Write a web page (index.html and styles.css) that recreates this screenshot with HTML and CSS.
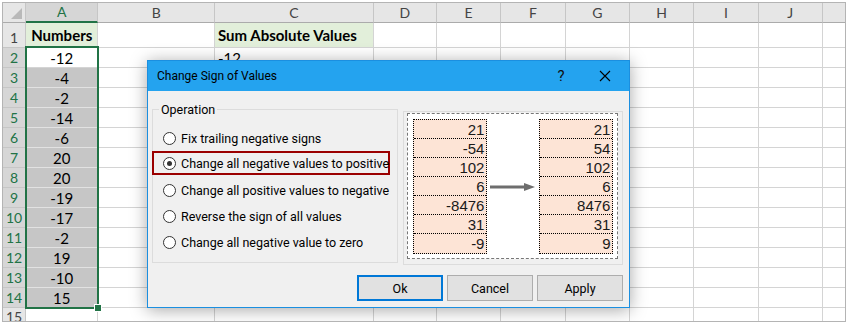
FILE: index.html
```html
<!DOCTYPE html>
<html lang="en">
<head>
<meta charset="UTF-8">
<title>Change Sign of Values</title>
<link rel="stylesheet" href="styles.css">
</head>
<body>
<div class="sheet">
    <table class="grid">
        <colgroup>
            <col style="width:23px"><col style="width:72px"><col style="width:116px"><col style="width:158px">
            <col style="width:63px"><col style="width:64px"><col style="width:64px"><col style="width:64px">
            <col style="width:64px"><col style="width:64px"><col style="width:64px"><col style="width:26px">
        </colgroup>
        <tr class="head-row">
            <th class="corner"><span class="corner-mark"></span></th>
            <th class="col-sel">A</th><th>B</th><th>C</th><th>D</th><th>E</th><th>F</th><th>G</th><th>H</th><th>I</th><th>J</th><th></th>
        </tr>
        <tr class="row-1">
            <th>1</th><td class="title center">Numbers</td><td></td><td class="title">Sum Absolute Values</td><td></td><td></td><td></td><td></td><td></td><td></td><td></td><td></td>
        </tr>
        <tr><th class="row-sel">2</th><td class="center active">-12</td><td></td><td>-12</td><td></td><td></td><td></td><td></td><td></td><td></td><td></td><td></td></tr>
        <tr><th class="row-sel">3</th><td class="center sel">-4</td><td></td><td></td><td></td><td></td><td></td><td></td><td></td><td></td><td></td><td></td></tr>
        <tr><th class="row-sel">4</th><td class="center sel">-2</td><td></td><td></td><td></td><td></td><td></td><td></td><td></td><td></td><td></td><td></td></tr>
        <tr><th class="row-sel">5</th><td class="center sel">-14</td><td></td><td></td><td></td><td></td><td></td><td></td><td></td><td></td><td></td><td></td></tr>
        <tr><th class="row-sel">6</th><td class="center sel">-6</td><td></td><td></td><td></td><td></td><td></td><td></td><td></td><td></td><td></td><td></td></tr>
        <tr><th class="row-sel">7</th><td class="center sel">20</td><td></td><td></td><td></td><td></td><td></td><td></td><td></td><td></td><td></td><td></td></tr>
        <tr><th class="row-sel">8</th><td class="center sel">20</td><td></td><td></td><td></td><td></td><td></td><td></td><td></td><td></td><td></td><td></td></tr>
        <tr><th class="row-sel">9</th><td class="center sel">-19</td><td></td><td></td><td></td><td></td><td></td><td></td><td></td><td></td><td></td><td></td></tr>
        <tr><th class="row-sel">10</th><td class="center sel">-17</td><td></td><td></td><td></td><td></td><td></td><td></td><td></td><td></td><td></td><td></td></tr>
        <tr><th class="row-sel">11</th><td class="center sel">-2</td><td></td><td></td><td></td><td></td><td></td><td></td><td></td><td></td><td></td><td></td></tr>
        <tr><th class="row-sel">12</th><td class="center sel">19</td><td></td><td></td><td></td><td></td><td></td><td></td><td></td><td></td><td></td><td></td></tr>
        <tr><th class="row-sel">13</th><td class="center sel">-10</td><td></td><td></td><td></td><td></td><td></td><td></td><td></td><td></td><td></td><td></td></tr>
        <tr><th class="row-sel">14</th><td class="center sel">15</td><td></td><td></td><td></td><td></td><td></td><td></td><td></td><td></td><td></td><td></td></tr>
        <tr class="row-last"><th>15</th><td></td><td></td><td></td><td></td><td></td><td></td><td></td><td></td><td></td><td></td><td></td></tr>
    </table>
    <div class="selection"><span class="fill-handle"></span></div>

    <div class="dialog">
        <div class="title-bar">
            <span class="title-text">Change Sign of Values</span>
            <span class="title-help">?</span>
            <svg class="title-close" width="12" height="12" viewBox="0 0 12 12">
                <path d="M1 1 L11 11 M11 1 L1 11" stroke="#000" stroke-width="1.1" fill="none"/>
            </svg>
        </div>
        <div class="dialog-body">
            <div class="panes">
                <fieldset class="operation">
                    <legend>Operation</legend>
                    <div class="option"><span class="radio"></span>Fix trailing negative signs</div>
                    <div class="option highlighted"><span class="radio checked"></span>Change all negative values to positive</div>
                    <div class="option"><span class="radio"></span>Change all positive values to negative</div>
                    <div class="option"><span class="radio"></span>Reverse the sign of all values</div>
                    <div class="option"><span class="radio"></span>Change all negative value to zero</div>
                </fieldset>
                <div class="preview">
                    <div class="preview-inner">
                        <div class="sample">
                            <div class="sample-cell">21</div>
                            <div class="sample-cell">-54</div>
                            <div class="sample-cell">102</div>
                            <div class="sample-cell">6</div>
                            <div class="sample-cell">-8476</div>
                            <div class="sample-cell">31</div>
                            <div class="sample-cell">-9</div>
                        </div>
                        <div class="arrow">
                            <svg width="46" height="10" viewBox="0 0 46 10">
                                <path d="M0 5 H36" stroke="#6e6e6e" stroke-width="3"/>
                                <path d="M34 1 L45 5 L34 9 Z" fill="#6e6e6e"/>
                            </svg>
                        </div>
                        <div class="sample">
                            <div class="sample-cell">21</div>
                            <div class="sample-cell">54</div>
                            <div class="sample-cell">102</div>
                            <div class="sample-cell">6</div>
                            <div class="sample-cell">8476</div>
                            <div class="sample-cell">31</div>
                            <div class="sample-cell">9</div>
                        </div>
                    </div>
                </div>
            </div>
            <div class="buttons">
                <button class="btn default">Ok</button>
                <button class="btn">Cancel</button>
                <button class="btn">Apply</button>
            </div>
        </div>
    </div>
</div>
</body>
</html>
```

FILE: styles.css
```css
body {
    margin: 0;
    background: #fff;
    font-family: Lato, "Open Sans", sans-serif;
}
.sheet {
    position: relative;
    margin: 2px 0 0 2px;
    width: 844px;
    height: 320px;
    border: 1px solid #b4b4b4;
    box-sizing: border-box;
    overflow: hidden;
}
.grid {
    table-layout: fixed;
    border-collapse: separate;
    border-spacing: 0;
    width: 846px;
    font-size: 15px;
    color: #000;
}
.grid tr {
    height: 20px;
}
.grid td,
.grid th {
    padding: 0 3px;
    border-right: 1px solid #d4d4d4;
    border-bottom: 1px solid #d4d4d4;
    white-space: nowrap;
    overflow: hidden;
    line-height: 18px;
    text-align: left;
    box-sizing: border-box;
}
.grid th {
    background: #e6e6e6;
    font-weight: normal;
    font-size: 14px;
    color: #444;
    text-align: center;
    border-right-color: #c6c6c6;
    border-bottom-color: #c6c6c6;
}
.grid .head-row {
    height: 19px;
}
.grid .head-row th {
    border-right-color: #c6c6c6;
    border-bottom: 1px solid #ababab;
}
.grid .head-row th.col-sel {
    background: #d6d6d6;
    color: #217346;
    border-bottom: 2px solid #217346;
}
.grid .corner {
    position: relative;
}
.corner-mark {
    position: absolute;
    right: 3px;
    bottom: 3px;
    border-style: solid;
    border-width: 0 0 11px 11px;
    border-color: transparent transparent #b9b9b9 transparent;
}
.grid .row-1 {
    height: 25px;
}
.grid .row-1 th {
    padding-top: 6px;
}
.grid th.row-sel {
    background: #d6d6d6;
    color: #217346;
}
.grid .row-last {
    height: 16px;
}
.grid .title {
    background: #e2efda;
    font-weight: bold;
    border-right-color: #d4d4d4;
}
.grid .center {
    text-align: center;
}
.grid .sel {
    background: #c6c6c6;
    border-bottom-color: #e2e2e2;
}
.selection {
    position: absolute;
    left: 22px;
    top: 43px;
    width: 74px;
    height: 263px;
    border: 2px solid #217346;
    box-sizing: border-box;
}
.fill-handle {
    position: absolute;
    right: -5px;
    bottom: -5px;
    width: 6px;
    height: 6px;
    background: #217346;
    border: 1px solid #fff;
}

/* dialog */
.dialog {
    position: absolute;
    left: 144px;
    top: 57px;
    width: 483px;
    height: 248px;
    box-sizing: border-box;
    border: 1px solid #1b8fe0;
    background: #f0f0f0;
    box-shadow: 0 2px 16px rgba(0, 0, 0, 0.35);
    font-family: Roboto, "Noto Sans", sans-serif;
    font-size: 12.5px;
    color: #000;
}
.title-bar {
    display: flex;
    align-items: center;
    height: 30px;
    background: #24a3ef;
    padding: 0 0 0 9px;
}
.title-text {
    flex: 1;
    font-size: 12px;
}
.title-help {
    width: 20px;
    margin-right: 28px;
    font-size: 15px;
    text-align: center;
    color: #111;
}
.title-close {
    margin: 0 18px 0 0;
}
.dialog-body {
    padding: 11px 6px 0 4px;
}
.panes {
    display: flex;
    gap: 5px;
}
.operation {
    margin: 0;
    padding: 8px 0 4px 0;
    width: 247px;
    height: 161px;
    box-sizing: border-box;
    border: 1px solid #dcdcdc;
}
.operation legend {
    margin-left: 6px;
    padding: 0 2px;
}
.option {
    display: flex;
    align-items: center;
    height: 26px;
    padding-left: 10px;
    box-sizing: border-box;
    white-space: nowrap;
}
.option.highlighted {
    height: 24px;
    margin: 0 0 2px -1px;
    width: 238px;
    padding-left: 9px;
    border: 2px solid #9b0000;
}
.radio {
    display: inline-block;
    flex: none;
    width: 13px;
    height: 13px;
    border: 1px solid #333;
    border-radius: 50%;
    background: #fff;
    box-sizing: border-box;
    margin-right: 5px;
    position: relative;
}
.radio.checked::after {
    content: "";
    position: absolute;
    left: 3px;
    top: 3px;
    width: 5px;
    height: 5px;
    border-radius: 50%;
    background: #333;
}
.preview {
    margin-top: 9px;
    width: 220px;
    height: 154px;
    box-sizing: border-box;
    border: 1px solid #dcdcdc;
    padding: 1px 4px 5px 3px;
}
.preview-inner {
    display: flex;
    height: 100%;
    box-sizing: border-box;
    border: 1px dashed #777;
    background: #fff;
    padding: 5px 0 0 5px;
}
.sample {
    width: 74px;
    height: 135px;
    box-sizing: border-box;
    border: 1px dotted #000;
    background: #fde4d6;
}
.sample-cell {
    height: 19px;
    box-sizing: border-box;
    border-bottom: 1px dotted #000;
    font-family: "Liberation Sans", Arial, sans-serif;
    font-size: 15px;
    line-height: 19px;
    text-align: right;
    padding-right: 2px;
    color: #1a1a1a;
}
.sample-cell:last-child {
    border-bottom: none;
}
.arrow {
    width: 52px;
    display: flex;
    align-items: center;
    justify-content: center;
    height: 135px;
}
.buttons {
    display: flex;
    justify-content: flex-end;
    gap: 4px;
    margin-top: 10px;
}
.btn {
    width: 86px;
    height: 26px;
    background: #e1e1e1;
    border: 1px solid #adadad;
    font-family: Roboto, "Noto Sans", sans-serif;
    font-size: 12.5px;
    color: #000;
    padding: 0;
}
.btn.default {
    border: 2px solid #0078d7;
}
```
